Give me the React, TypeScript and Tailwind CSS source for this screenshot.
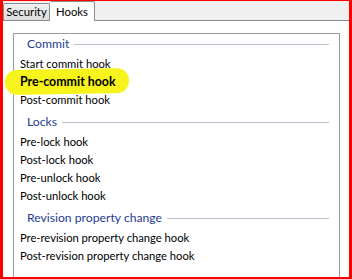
import React from 'react';

type Section = { title: string; items: { label: string; highlight?: boolean }[] };

const sections: Section[] = [
  {
    title: 'Commit',
    items: [{ label: 'Start commit hook' }, { label: 'Pre-commit hook', highlight: true }, { label: 'Post-commit hook' }],
  },
  {
    title: 'Locks',
    items: [{ label: 'Pre-lock hook' }, { label: 'Post-lock hook' }, { label: 'Pre-unlock hook' }, { label: 'Post-unlock hook' }],
  },
  {
    title: 'Revision property change',
    items: [{ label: 'Pre-revision property change hook' }, { label: 'Post-revision property change hook' }],
  },
];

function SectionHeader({ title, first }: { title: string; first?: boolean }) {
  return (
    <div className={`flex h-[20px] items-center pl-[13px] pr-[10px] ${first ? '' : 'mt-[3px]'} mb-px`}>
      <span className="text-[12.2px] leading-none text-[#1f3c94]">{title}</span>
      <div className="ml-[5px] h-px flex-1 bg-[#b9c0cc]" />
    </div>
  );
}

export default function App() {
  return (
    <div
      className="relative flex h-[279px] w-[352px] flex-col overflow-hidden border-t border-b-2 border-l-[3px] border-r-[3px] border-[#ff0000] bg-white text-black"
      style={{ fontFamily: 'Lato, "Noto Sans", sans-serif' }}
    >
      {/* tab strip */}
      <div className="flex h-[20px] shrink-0 items-end border-b border-[#898c95] bg-[#f0f0f0]">
        <div className="flex h-[17px] w-[47px] items-center justify-center rounded-t-[2px] border border-b-0 border-[#898c95] bg-gradient-to-b from-[#f2f2f2] to-[#dcdcdc] text-[11.3px]">
          Security
        </div>
        <div className="-mb-px flex h-[20px] w-[45px] items-start justify-center rounded-t-[2px] border border-b-0 border-l-0 border-[#898c95] bg-white pt-[2px] text-[11.3px]">
          Hooks
        </div>
      </div>

      {/* tab page */}
      <div className="flex-1 bg-white pl-[10px] pt-[12px]">
        <div className="relative h-[260px] w-[327px] border border-b-0 border-[#9a9a9a]">
          {sections.map((section, si) => (
            <div key={section.title}>
              <SectionHeader title={section.title} first={si === 0} />
              {section.items.map((item) => (
                <div key={item.label} className="relative flex h-[18px] items-center pl-[6px] text-[11.2px]">
                  {item.highlight && (
                    <div className="absolute left-[-9px] top-[-4px] z-10 h-[25px] w-[124px] -rotate-[1deg] rounded-[12px] bg-[#f6f41c] blur-[0.5px]" />
                  )}
                  <span className={`relative z-20 ${item.highlight ? 'text-[12.4px] font-bold' : ''}`}>{item.label}</span>
                </div>
              ))}
            </div>
          ))}
        </div>
      </div>
    </div>
  );
}
